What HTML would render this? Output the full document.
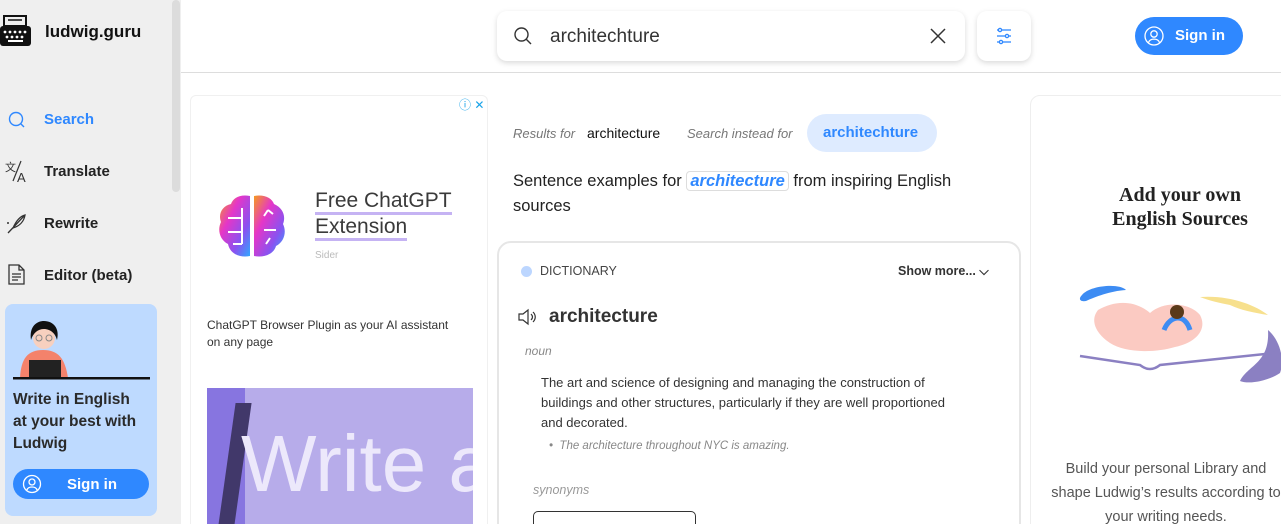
<!DOCTYPE html>
<html><head><meta charset="utf-8"><style>
*{box-sizing:border-box;margin:0;padding:0}
html,body{width:1281px;height:524px;overflow:hidden}
body{background:#fff;font-family:"Liberation Sans",sans-serif;position:relative;color:#222}
.abs{position:absolute}
.side{left:0;top:0;width:171px;height:524px;background:#efefef}
.sb{left:171px;top:0;width:10px;height:524px;background:#efefef}
.thumb{left:172px;top:0;width:8px;height:192px;background:#dcdcdc;border-radius:4px}
.nav{font-size:15px;font-weight:bold;color:#222}
</style></head><body>
<div class="abs side"></div><div class="abs sb"></div><div class="abs thumb"></div>
<svg class="abs" style="left:0;top:14px" width="32" height="34" viewBox="0 0 32 34"><rect x="4" y="2" width="22" height="10" fill="none" stroke="#111" stroke-width="2"/><line x1="8" y1="6" x2="22" y2="6" stroke="#111" stroke-width="1.5"/><rect x="0" y="12" width="31" height="20" rx="3" fill="#111"/><g fill="#fff"><circle cx="5" cy="18" r="1.4"/><circle cx="10" cy="18" r="1.4"/><circle cx="15" cy="18" r="1.4"/><circle cx="20" cy="18" r="1.4"/><circle cx="25" cy="18" r="1.4"/><circle cx="7" cy="23" r="1.4"/><circle cx="12" cy="23" r="1.4"/><circle cx="17" cy="23" r="1.4"/><circle cx="22" cy="23" r="1.4"/><rect x="8" y="26" width="15" height="2"/></g></svg>
<div class="abs" style="left:45px;top:22px;font-size:17px;font-weight:bold;color:#111">ludwig.guru</div>
<svg class="abs" style="left:8px;top:111px" width="18" height="18"><circle cx="8" cy="8" r="6.5" fill="none" stroke="#2f88ff" stroke-width="1.4"/><line x1="13" y1="13" x2="16" y2="16" stroke="#2f88ff" stroke-width="1.4"/></svg>
<div class="abs nav" style="left:44px;top:111px;color:#2f88ff">Search</div>
<svg class="abs" style="left:5px;top:159px" width="24" height="24"><text x="0" y="12" font-size="11" font-family="Noto Sans CJK SC,sans-serif" fill="#333">文</text><line x1="16" y1="2" x2="8" y2="22" stroke="#333" stroke-width="1.2"/><text x="12" y="23" font-size="13" font-family="Liberation Sans,sans-serif" fill="#333">A</text></svg>
<div class="abs nav" style="left:44px;top:163px">Translate</div>
<svg class="abs" style="left:5px;top:213px" width="22" height="22"><path d="M3 20 L19 3 M8 15 C12 6 16 3 20 2 C19 8 15 13 8 15" fill="none" stroke="#333" stroke-width="1.3"/><circle cx="3" cy="10" r="1" fill="#333"/></svg>
<div class="abs nav" style="left:44px;top:215px">Rewrite</div>
<svg class="abs" style="left:8px;top:264px" width="18" height="22"><path d="M1 1 H11 L16 6 V20 H1 Z M11 1 V6 H16 M4 10 H13 M4 13 H13 M4 16 H10" fill="none" stroke="#333" stroke-width="1.3"/></svg>
<div class="abs nav" style="left:44px;top:267px">Editor (beta)</div>
<div class="abs" style="left:5px;top:304px;width:152px;height:212px;background:#bedaff;border-radius:8px"></div>
<svg class="abs" style="left:13px;top:318px" width="137" height="64"><path d="M7 60 C8 40 15 32 30 32 C45 32 52 40 55 60 Z" fill="#f4826b"/><rect x="16" y="42" width="32" height="18" fill="#222"/><circle cx="31" cy="20" r="11" fill="#f7d0bf"/><path d="M18 22 C16 8 24 3 31 3 C40 3 47 10 44 22 C42 14 36 11 31 11 C25 11 20 15 18 22Z" fill="#111"/><circle cx="26" cy="20" r="3" fill="none" stroke="#888"/><circle cx="36" cy="20" r="3" fill="none" stroke="#888"/><rect x="0" y="59" width="137" height="2.5" fill="#111"/></svg>
<div class="abs" style="left:13px;top:389px;font-size:15.5px;line-height:22px;font-weight:bold;color:#2a2a2a">Write in English<br>at your best with<br>Ludwig</div>
<div class="abs" style="left:13px;top:469px;width:136px;height:30px;background:#2f88ff;border-radius:15px"></div>
<svg class="abs" style="left:22px;top:474px" width="20" height="20"><circle cx="10" cy="10" r="8.5" fill="none" stroke="#fff" stroke-width="1.3"/><circle cx="10" cy="8" r="3" fill="none" stroke="#fff" stroke-width="1.3"/><path d="M5 16 C6 12 14 12 15 16" fill="none" stroke="#fff" stroke-width="1.3"/></svg>
<div class="abs" style="left:67px;top:476px;font-size:15px;font-weight:bold;color:#fff">Sign in</div>
<div class="abs" style="left:181px;top:72px;width:1100px;height:1px;background:#ddd"></div>
<div class="abs" style="left:497px;top:11px;width:468px;height:50px;border-radius:10px;background:#fff;box-shadow:0 2px 6px rgba(0,0,0,.15)"></div>
<svg class="abs" style="left:513px;top:26px" width="20" height="20"><circle cx="8.5" cy="8.5" r="6.5" fill="none" stroke="#333" stroke-width="1.4"/><line x1="13" y1="13" x2="18" y2="18" stroke="#333" stroke-width="1.4"/></svg>
<div class="abs" style="left:550px;top:26px;font-size:19px;color:#333">architechture</div>
<svg class="abs" style="left:929px;top:27px" width="18" height="18"><path d="M2 2 L16 16 M16 2 L2 16" stroke="#333" stroke-width="1.5"/></svg>
<div class="abs" style="left:977px;top:11px;width:54px;height:50px;border-radius:10px;background:#fff;box-shadow:0 2px 6px rgba(0,0,0,.15)"></div>
<svg class="abs" style="left:995px;top:27px" width="18" height="18"><g stroke="#2f88ff" stroke-width="1.3" fill="none"><line x1="2" y1="3" x2="16" y2="3"/><line x1="2" y1="9" x2="16" y2="9"/><line x1="2" y1="15" x2="16" y2="15"/><circle cx="5" cy="3" r="1.6" fill="#fff"/><circle cx="12" cy="9" r="1.6" fill="#fff"/><circle cx="6" cy="15" r="1.6" fill="#fff"/></g></svg>
<div class="abs" style="left:1135px;top:17px;width:108px;height:38px;border-radius:19px;background:#2f88ff"></div>
<svg class="abs" style="left:1143px;top:25px" width="22" height="22"><circle cx="11" cy="11" r="9" fill="none" stroke="#fff" stroke-width="1.3"/><circle cx="11" cy="9" r="3.2" fill="none" stroke="#fff" stroke-width="1.3"/><path d="M5.5 17.5 C7 13 15 13 16.5 17.5" fill="none" stroke="#fff" stroke-width="1.3"/></svg>
<div class="abs" style="left:1175px;top:27px;font-size:15px;font-weight:bold;color:#fff">Sign in</div>
<div class="abs" style="left:190px;top:95px;width:298px;height:440px;border:1px solid #f0f0f0;border-radius:6px;background:#fff"></div>
<div class="abs" style="left:459px;top:96px;font-size:12px;color:#1aa3e8">ⓘ ✕</div>
<svg class="abs" style="left:218px;top:194px" width="70" height="64"><defs><linearGradient id="g" x1="0" y1="0" x2="1" y2="1"><stop offset="0" stop-color="#f59b1e"/><stop offset=".35" stop-color="#e536c8"/><stop offset=".7" stop-color="#8a52f0"/><stop offset="1" stop-color="#2fa8ff"/></linearGradient></defs><path d="M32 2 C22 0 15 4 13 10 C4 12 0 20 3 28 C-1 36 2 46 10 50 C12 60 22 64 32 62 Z" fill="url(#g)"/><path d="M36 2 C46 0 54 4 56 10 C65 14 68 22 65 30 C69 38 66 48 58 52 C56 60 46 64 36 62 Z" fill="url(#g)"/><g stroke="#fff" stroke-width="2" fill="none"><path d="M10 24 H24 M24 14 V50 M10 38 H24 M15 50 H24 M50 16 L46 22 M50 16 L55 20 M46 36 H58 M48 50 L52 44"/></g></svg>
<div class="abs" style="left:315px;top:188px;font-size:21px;line-height:26px;color:#3a3a3a"><span style="border-bottom:3px solid #c5b3f3">Free ChatGPT</span><br><span style="border-bottom:3px solid #c5b3f3">Extension</span></div>
<div class="abs" style="left:315px;top:250px;font-size:10px;color:#bbb">Sider</div>
<div class="abs" style="left:207px;top:317px;font-size:12px;line-height:17px;color:#333">ChatGPT Browser Plugin as your AI assistant<br>on any page</div>
<div class="abs" style="left:207px;top:388px;width:266px;height:136px;background:#b7acea;overflow:hidden">
<div class="abs" style="left:0;top:0;width:38px;height:137px;background:#8775e0"></div>
<div class="abs" style="left:20px;top:15px;width:16px;height:122px;background:#41386a;transform:skewX(-8deg)"></div>
<div class="abs" style="left:34px;top:36px;font-size:80px;color:#ece8fb;line-height:80px;white-space:nowrap">Write a</div></div>
<div class="abs" style="left:513px;top:126px;font-size:13px;color:#777;font-style:italic">Results for</div>
<div class="abs" style="left:587px;top:125px;font-size:14px;color:#111">architecture</div>
<div class="abs" style="left:687px;top:126px;font-size:13px;color:#777;font-style:italic">Search instead for</div>
<div class="abs" style="left:807px;top:114px;width:130px;height:38px;border-radius:19px;background:#deebff"></div>
<div class="abs" style="left:823px;top:124px;font-size:15px;font-weight:bold;color:#2f88ff">architechture</div>
<div class="abs" style="left:513px;top:169px;font-size:16.5px;line-height:25px;color:#222;width:500px">Sentence examples for <span style="border:1px solid #ddd;border-radius:4px;padding:0 3px;color:#2f88ff;font-style:italic;font-weight:bold">architecture</span> from inspiring English sources</div>
<div class="abs" style="left:497px;top:241px;width:524px;height:300px;border:2px solid #e6e6e6;border-radius:14px"></div>
<div class="abs" style="left:521px;top:266px;width:11px;height:11px;border-radius:50%;background:#bcd6ff"></div>
<div class="abs" style="left:540px;top:264px;font-size:12.5px;color:#444">DICTIONARY</div>
<div class="abs" style="left:898px;top:264px;font-size:12.5px;font-weight:bold;color:#333">Show more... ⌵</div>
<svg class="abs" style="left:517px;top:308px" width="20" height="18"><path d="M2 6 H6 L11 2 V16 L6 12 H2 Z M14 6 C16 8 16 10 14 12 M16 4 C19 7 19 11 16 14" fill="none" stroke="#333" stroke-width="1.2"/></svg>
<div class="abs" style="left:549px;top:306px;font-size:19px;font-weight:bold;color:#333">architecture</div>
<div class="abs" style="left:525px;top:344px;font-size:12px;font-style:italic;color:#888">noun</div>
<div class="abs" style="left:541px;top:373px;font-size:13px;line-height:20px;color:#333;width:412px">The art and science of designing and managing the construction of buildings and other structures, particularly if they are well proportioned and decorated.</div>
<div class="abs" style="left:549px;top:440px;font-size:11.5px;font-style:italic;color:#888">•&nbsp;&nbsp;The architecture throughout NYC is amazing.</div>
<div class="abs" style="left:533px;top:483px;font-size:12.5px;font-style:italic;color:#999">synonyms</div>
<div class="abs" style="left:533px;top:511px;width:163px;height:30px;border:1.5px solid #333;border-radius:5px"></div>
<div class="abs" style="left:1030px;top:95px;width:260px;height:440px;border:1px solid #eee;border-radius:10px"></div>
<div class="abs" style="left:1080px;top:183px;width:200px;text-align:center;font-family:'Liberation Serif',serif;font-weight:bold;font-size:20px;line-height:24px;color:#222">Add your own<br>English Sources</div>
<svg class="abs" style="left:1060px;top:285px" width="221" height="135"><path d="M22 10 C30 0 60 -2 66 5 C50 6 35 12 26 16 C20 17 18 14 22 10Z" fill="#3d8cf3"/><path d="M38 25 C55 15 75 15 90 28 C105 15 130 18 140 30 C148 45 135 58 115 62 C95 68 65 68 50 58 C35 48 30 35 38 25Z" fill="#fbcac2"/><path d="M140 12 C170 10 195 20 208 30 C195 28 180 25 170 20 C160 18 150 16 140 12Z" fill="#f7e08d"/><path d="M208 45 C220 55 225 75 220 88 C210 95 190 100 180 96 C188 80 210 78 208 45Z" fill="#8b80c2"/><path d="M20 71 L80 80 Q90 88 100 80 L215 68" fill="none" stroke="#8b80c2" stroke-width="2.5"/><path d="M104 45 C110 30 125 28 130 45" fill="none" stroke="#3d8cf3" stroke-width="5"/><circle cx="117" cy="27" r="7" fill="#5a3a1a"/></svg>
<div class="abs" style="left:1026px;top:457px;width:280px;text-align:center;font-size:14.5px;line-height:24px;color:#555;white-space:nowrap">Build your personal Library and<br>shape Ludwig’s results according to<br>your writing needs.</div>
</body></html>
